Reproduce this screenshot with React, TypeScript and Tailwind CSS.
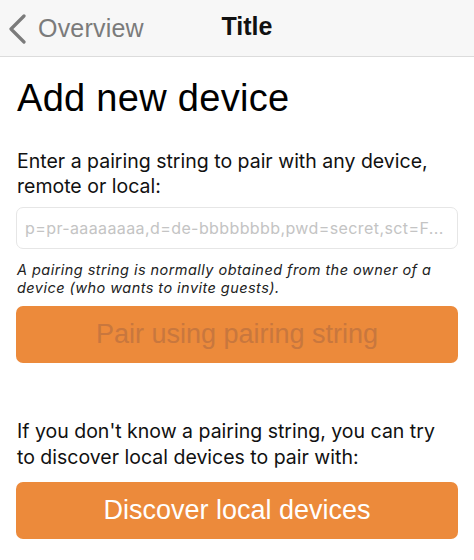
import React from "react";

export default function App() {
  return (
    <div className="w-[474px] h-[560px] bg-white overflow-hidden" style={{ fontFamily: '"Liberation Sans", Arial, sans-serif' }}>
      <div className="h-[57px] bg-[#f7f7f7] border-b border-[#dcdcdc] flex items-center relative">
        <div className="flex items-center pl-[8px] gap-[12px] text-[#7b7b7b]">
          <svg width="18" height="30" viewBox="0 0 18 30" className="mt-[1px]">
            <path d="M16 2 L3 15 L16 28" fill="none" stroke="#7b7b7b" strokeWidth="3.2" strokeLinecap="round" strokeLinejoin="round" />
          </svg>
          <span className="text-[25px] leading-none tracking-[0.2px]">Overview</span>
        </div>
        <div className="absolute left-0 right-0 text-center pointer-events-none">
          <span className="text-[25px] leading-none font-bold text-[#111] ml-[20px]">Title</span>
        </div>
      </div>
      <div className="px-[16px]">
        <h1 className="text-[38px] leading-none text-black pt-[22px] pl-[1px] tracking-[0.3px]">Add new device</h1>
        <p className="text-[19.5px] leading-[25px] text-[#111] mt-[32px] pl-[1px]" style={{ fontFamily: 'Inter, "Liberation Sans", sans-serif' }}>
          Enter a pairing string to pair with any device, remote or local:
        </p>
        <div className="mt-[8px] h-[42px] border border-[#e6e6e6] rounded-[7px] flex items-center px-[8px] text-[16px] tracking-[0.4px] text-[#c4c4c4] whitespace-nowrap overflow-hidden" style={{ fontFamily: 'Inter, "Liberation Sans", sans-serif' }}>
          p=pr-aaaaaaaa,d=de-bbbbbbbb,pwd=secret,sct=F...
        </div>
        <p className="text-[14.5px] leading-[18px] italic tracking-[0.45px] text-[#222] mt-[12px] pl-[1px]" style={{ fontFamily: 'Inter, "Liberation Sans", sans-serif' }}>
          A pairing string is normally obtained from the owner of a device (who wants to invite guests).
        </p>
        <div className="mt-[9px] h-[57px] rounded-[7px] bg-[#ec8a3b] flex items-center justify-center text-[27px] text-[#c8773e]">
          Pair using pairing string
        </div>
        <p className="text-[19.5px] leading-[26px] text-[#111] mt-[55px] pl-[1px]" style={{ fontFamily: 'Inter, "Liberation Sans", sans-serif' }}>
          If you don't know a pairing string, you can try to discover local devices to pair with:
        </p>
        <div className="mt-[12px] h-[57px] rounded-[7px] bg-[#ec8a3b] flex items-center justify-center text-[27px] text-white">
          Discover local devices
        </div>
      </div>
    </div>
  );
}
